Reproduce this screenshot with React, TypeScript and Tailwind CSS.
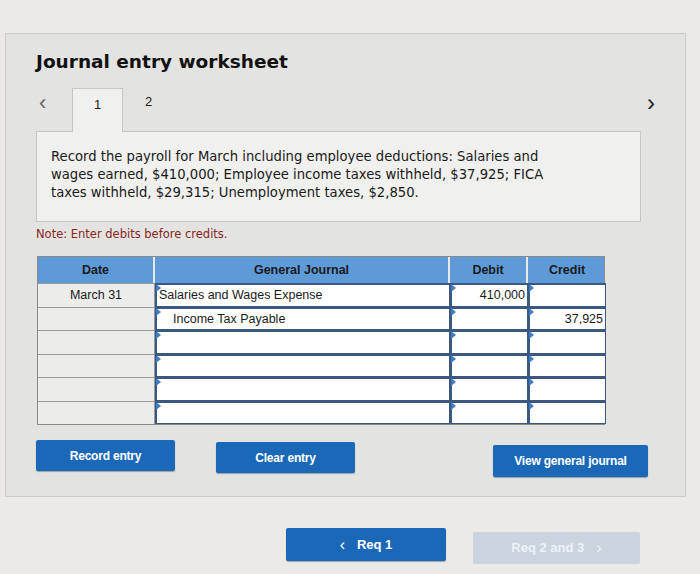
import React from "react";

const rows = [
  { date: "March 31", account: "Salaries and Wages Expense", indent: false, debit: "410,000", credit: "" },
  { date: "", account: "Income Tax Payable", indent: true, debit: "", credit: "37,925" },
  { date: "", account: "", indent: false, debit: "", credit: "" },
  { date: "", account: "", indent: false, debit: "", credit: "" },
  { date: "", account: "", indent: false, debit: "", credit: "" },
  { date: "", account: "", indent: false, debit: "", credit: "" },
];

function InputCell({ children, className = "" }: { children?: React.ReactNode; className?: string }) {
  return (
    <div className={`relative bg-white border-t-2 border-l-2 border-r border-b border-[#3a5882] h-full flex items-center ${className}`}>
      <span className="absolute -top-[1px] -left-[1px] w-0 h-0 border-t-[4px] border-b-[4px] border-l-[5px] border-t-transparent border-b-transparent border-l-[#3f7cc4]" />
      {children}
    </div>
  );
}

export default function App() {
  return (
    <div
      className="w-[700px] h-[574px] bg-[#ebeae7] overflow-hidden pt-[33px] pl-[5px]"
      style={{ fontFamily: "'Liberation Sans', Arial, sans-serif" }}
    >
      {/* Worksheet panel */}
      <div className="w-[681px] h-[464px] bg-[#e3e3e1] border border-[#cdcdcb] pl-[30px]">
        <h1
          className="mt-[14px] text-[18.5px] leading-[28px] font-bold text-[#111]"
          style={{ fontFamily: "'DejaVu Sans', Verdana, sans-serif" }}
        >
          Journal entry worksheet
        </h1>

        {/* Tabs */}
        <div className="mt-[12px] flex items-end h-[43px] w-[625px] relative">
          <span className="text-[22px] text-[#666] ml-[3px] mb-[12px] w-[33px]">&lsaquo;</span>
          <div className="w-[51px] h-[44px] bg-[#f0f0ee] border border-[#c6c6c4] border-b-0 flex justify-center pt-[6px] text-[13px] text-[#222] -mb-[1px] z-10">
            1
          </div>
          <span className="ml-[22px] mb-[20px] text-[13px] text-[#222]">2</span>
          <span className="ml-auto mb-[10px] mr-[6px] text-[24px] text-[#222]">&rsaquo;</span>
        </div>

        {/* Question box */}
        <div
          className="w-[605px] h-[91px] bg-[#f0f0ee] border border-[#c6c6c4] pl-[14px] pt-[16px] text-[13.2px] leading-[18px] text-[#1a1a1a]"
          style={{ fontFamily: "'DejaVu Sans', Verdana, sans-serif" }}
        >
          Record the payroll for March including employee deductions: Salaries and
          <br />
          wages earned, $410,000; Employee income taxes withheld, $37,925; FICA
          <br />
          taxes withheld, $29,315; Unemployment taxes, $2,850.
        </div>

        <p
          className="mt-[4px] text-[11.5px] text-[#8a2323]"
          style={{ fontFamily: "'DejaVu Sans', Verdana, sans-serif" }}
        >
          Note: Enter debits before credits.
        </p>

        {/* Journal table */}
        <div className="mt-[13px] ml-[1px] w-[568px] border border-[#8a8a8a] bg-[#e9e9e7]">
          <div className="grid grid-cols-[117px_295px_78px_78px] h-[26px] bg-[#5f9ad8] text-[12.5px] font-bold text-[#1a1a1a]">
            <div className="flex items-center justify-center border-r-2 border-[#e9e9e7]">Date</div>
            <div className="flex items-center justify-center border-r-2 border-[#e9e9e7]">General Journal</div>
            <div className="flex items-center justify-center border-r-2 border-[#e9e9e7]">Debit</div>
            <div className="flex items-center justify-center">Credit</div>
          </div>
          {rows.map((r, i) => (
            <div key={i} className="grid grid-cols-[117px_295px_78px_78px] h-[23.5px] text-[12.5px] text-[#1a1a1a]">
              <div className="flex items-center justify-center border-t border-r border-[#9a9a9a] bg-[#ececea]">{r.date}</div>
              <InputCell className={r.indent ? "pl-[16px]" : "pl-[2px]"}>{r.account}</InputCell>
              <InputCell className="justify-end pr-[2px]">{r.debit}</InputCell>
              <InputCell className="justify-end pr-[2px]">{r.credit}</InputCell>
            </div>
          ))}
        </div>

        {/* Action buttons */}
        <div className="mt-[15px] flex items-start text-[12px] font-bold text-white tracking-[-0.2px]">
          <button className="w-[139px] h-[31px] bg-[#1c68b8] rounded-[2px] shadow-[0_1px_1px_rgba(0,0,0,0.3)]">
            Record entry
          </button>
          <button className="ml-[41px] mt-[2px] w-[139px] h-[31px] bg-[#1c68b8] rounded-[2px] shadow-[0_1px_1px_rgba(0,0,0,0.3)]">
            Clear entry
          </button>
          <button className="ml-[138px] mt-[5px] w-[155px] h-[32px] bg-[#1c68b8] rounded-[2px] shadow-[0_1px_1px_rgba(0,0,0,0.3)]">
            View general journal
          </button>
        </div>
      </div>

      {/* Requirement navigation */}
      <div className="flex items-start ml-[281px] mt-[31px] text-[13px] font-bold">
        <button className="w-[160px] h-[33px] bg-[#1c68b8] text-white rounded-[2px] flex items-center justify-center gap-[12px] shadow-[0_1px_1px_rgba(0,0,0,0.3)]">
          <span className="text-[16px] font-normal">&lsaquo;</span>
          <span>Req 1</span>
        </button>
        <button className="ml-[27px] mt-[4px] w-[167px] h-[32px] bg-[#cbd4de] text-[#eef2f6] rounded-[2px] flex items-center justify-center gap-[12px]">
          <span>Req 2 and 3</span>
          <span className="text-[16px] font-normal">&rsaquo;</span>
        </button>
      </div>
    </div>
  );
}
